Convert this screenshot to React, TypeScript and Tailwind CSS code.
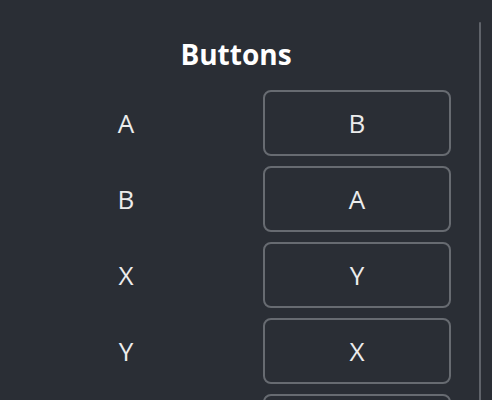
const rows = [
  { key: 'A', value: 'B' },
  { key: 'B', value: 'A' },
  { key: 'X', value: 'Y' },
  { key: 'Y', value: 'X' },
  { key: '', value: '' },
];

export default function App() {
  return (
    <div className="h-[400px] w-[492px] overflow-hidden bg-[#2a2e35] flex font-['Open_Sans',sans-serif] text-[#ececec]">
      <div className="w-[472px] shrink-0 flex flex-col">
        <h1 className="text-center text-[28px] font-bold leading-none mt-[40px] mb-[22px] text-white">Buttons</h1>
        <div className="flex flex-col gap-[10px]">
          {rows.map((row, i) => (
            <div key={i} className="flex items-center h-[66px] shrink-0">
              <div className="w-[252px] text-center text-[26px] leading-none">{row.key}</div>
              <button className="ml-[11px] w-[188px] h-[66px] rounded-[8px] border-2 border-[#676b71] bg-transparent text-[26px] leading-none text-[#ececec]">
                {row.value}
              </button>
            </div>
          ))}
        </div>
      </div>
      <div className="ml-[7px] mt-[22px] w-[2px] h-[400px] rounded-full bg-[#5f636a]" />
    </div>
  );
}
